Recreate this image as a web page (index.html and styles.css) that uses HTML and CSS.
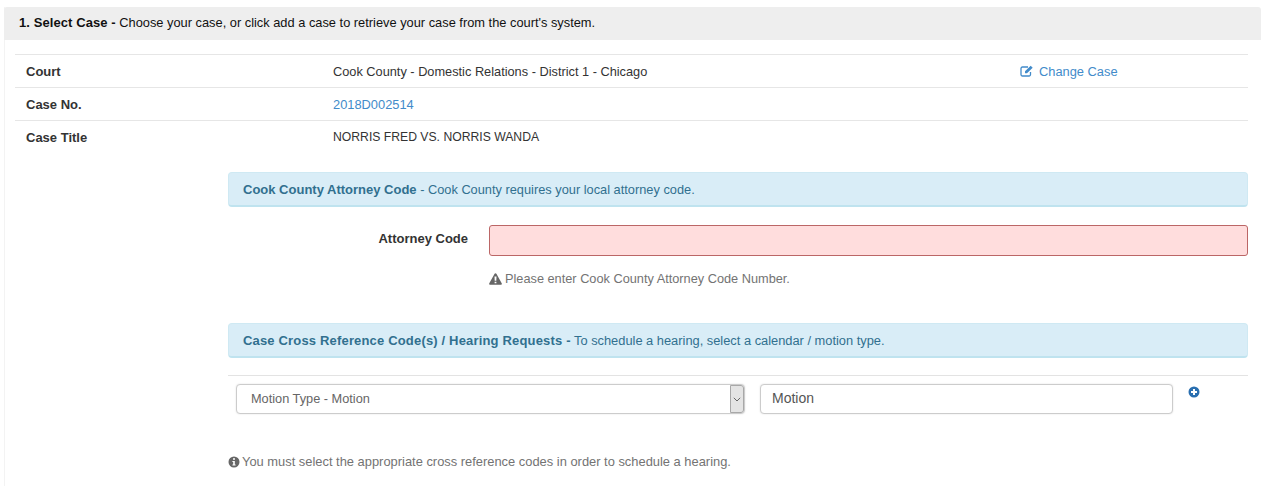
FILE: index.html
```html
<!DOCTYPE html>
<html lang="en">
<head>
<meta charset="utf-8">
<title>Select Case</title>
<link rel="stylesheet" href="styles.css">
</head>
<body>
<section class="panel">
  <header class="panel-head"><b>1. Select Case -</b> Choose your case, or click add a case to retrieve your case from the court's system.</header>
  <div class="panel-body">
    <div class="info-table">
      <div class="info-row">
        <div class="info-label">Court</div>
        <div class="info-value">Cook County - Domestic Relations - District 1 - Chicago</div>
        <a class="info-action" href="#">
          <svg class="icon-edit" viewBox="0 0 14 12" aria-hidden="true"><path d="M10.5 7v2.600A1.400 1.400 0 0 1 9.100 11H2.400A1.400 1.400 0 0 1 1 9.600V3.400A1.400 1.400 0 0 1 2.400 2H8" fill="none" stroke="currentColor" stroke-width="1.300"/><path d="M5 6.300 10.700 .8l2 1.900L7 8.300H5z" fill="currentColor"/></svg>
          Change Case</a>
      </div>
      <div class="info-row">
        <div class="info-label">Case No.</div>
        <div class="info-value"><a href="#">2018D002514</a></div>
      </div>
      <div class="info-row info-row-last">
        <div class="info-label">Case Title</div>
        <div class="info-value info-caps">NORRIS FRED VS. NORRIS WANDA</div>
      </div>
    </div>

    <div class="content">
      <div class="alert"><b>Cook County Attorney Code</b> - Cook County requires your local attorney code.</div>
      <div class="form-row">
        <label class="form-label" for="code">Attorney Code</label>
        <input class="form-input" id="code" type="text">
      </div>
      <p class="help">
        <svg class="icon-warn" viewBox="0 0 13 12" aria-hidden="true"><path fill-rule="evenodd" d="M6.500.3c.4 0 .7.200.9.500l5.300 9.500c.4.700-.1 1.500-.9 1.500H1.200c-.8 0-1.300-.8-.9-1.500L5.600.8c.2-.3.5-.5.900-.5zM5.500 3.500l.2 4.300h1.600l.2-4.300zM5.600 8.700v1.600h1.800V8.700z"/></svg>
        Please enter Cook County Attorney Code Number.</p>

      <div class="alert alert-second"><b class="spaced">Case Cross Reference Code(s) / Hearing Requests -</b> To schedule a hearing, select a calendar / motion type.</div>
      <hr class="rule">
      <div class="select-row">
        <div class="select-wrap">
          <select class="select"><option>Motion Type - Motion</option></select>
          <span class="select-arrow"><svg viewBox="0 0 8 5" aria-hidden="true"><path d="M.8.800 4 4l3.200-3.200" fill="none" stroke="currentColor" stroke-width="1"/></svg></span>
        </div>
        <input class="motion-input" type="text" value="Motion">
        <a class="add" href="#" aria-label="Add">
          <svg viewBox="0 0 12 12" aria-hidden="true"><path fill-rule="evenodd" d="M6 .5a5.500 5.500 0 1 1 0 11 5.500 5.500 0 0 1 0-11zM5 3v2H3v2h2v2h2V7h2V5H7V3z"/></svg>
        </a>
      </div>
      <p class="note">
        <svg class="icon-info" viewBox="0 0 12 12" aria-hidden="true"><path fill-rule="evenodd" d="M6 .5a5.500 5.500 0 1 1 0 11 5.500 5.500 0 0 1 0-11zM5 2.200v1.600h2V2.200zM4.400 5v1h.8v2.600h-.8v1h3.200v-1h-.8V5z"/></svg>
        You must select the appropriate cross reference codes in order to schedule a hearing.</p>
    </div>
  </div>
</section>
</body>
</html>
```
FILE: styles.css
```css
* { box-sizing: border-box; }
html, body { margin: 0; padding: 0; background: #fff; }
body {
  height: 486px;
  overflow: hidden;
  padding: 7px 0 0 4px;
  font: 12.8px/17px "Liberation Sans", Arial, sans-serif;
  color: #333;
}
a { color: #428bca; text-decoration: none; }
b { font-weight: 700; font-size: 13px; }

.panel { min-height: 479px; border-left: 1px solid #f3f3f3; }
.panel-head {
  height: 33px;
  margin-left: -1px;
  padding: 7px 15px 8px;
  background: #eee;
  border-radius: 3px 3px 0 0;
  font-size: 12.84px;
  color: #111;
}
.panel-head b { letter-spacing: .08px; }
.panel-body { padding: 14px 13px 0 10px; }

.info-row {
  display: grid;
  grid-template-columns: 307px 687px 1fr;
  height: 33px;
  padding: 8px 0 0 11px;
  border-top: 1px solid #e6e6e6;
}
.info-row-last { height: 35px; }
.info-label { font-size: 13px; font-weight: 700; color: #333; }
.info-value { font-size: 12.77px; }
.info-value a { font-size: 12.85px; }
.info-caps { font-size: 12.2px; }
.info-action { display: flex; align-items: center; gap: 5px; height: 17px; font-size: 12.85px; }
.icon-edit { width: 14px; height: 12px; margin-top: -2px; }

.content { margin: 17px 0 0 213px; }
.alert {
  height: 35px;
  padding: 8px 14px;
  background: #d9edf7;
  border: 1px solid #cfe9f3;
  border-bottom: 2px solid #bfe3ef;
  border-radius: 4px;
  font-size: 12.8px;
  color: #31708f;
}
.alert-second { margin-top: 36px; font-size: 12.85px; }
.alert .spaced { letter-spacing: .17px; }

.form-row { display: flex; align-items: flex-start; margin-top: 18px; }
.form-label {
  width: 261px;
  padding: 5px 21px 0 0;
  text-align: right;
  font-size: 13px;
  font-weight: 700;
  color: #333;
}
.form-input {
  flex: 1;
  min-width: 0;
  height: 31px;
  padding: 0 12px;
  background: #fdd;
  border: 1px solid #b66;
  border-radius: 3px;
  outline: 0;
}
.help {
  display: flex;
  align-items: center;
  gap: 3px;
  margin: 14px 0 0 261px;
  font-size: 12.76px;
  color: #737373;
}
.icon-warn { width: 13px; height: 12px; fill: #666; }

.rule { height: 1px; margin: 17px 0 0; border: 0; background: #e3e3e3; }

.select-row { display: flex; align-items: flex-start; margin: 8px 0 0 8px; }
.select-wrap { position: relative; width: 509px; height: 30px; }
.select {
  display: block;
  width: 100%;
  height: 100%;
  padding: 0 14px 2px;
  appearance: none;
  background: #fff;
  border: 1px solid #ccc;
  border-radius: 4px;
  box-shadow: 0 0 2px rgba(0,0,0,.12);
  font: 12.75px "Liberation Sans", Arial, sans-serif;
  color: #666;
}
.select-arrow {
  position: absolute;
  top: 1px; right: 1px; bottom: 1px;
  width: 14px;
  display: flex;
  align-items: center;
  justify-content: center;
  background: #e4e4e4;
  border: 1px solid #a8a8a8;
  border-radius: 0 3px 3px 0;
  color: #666;
}
.select-arrow svg { width: 8px; height: 5px; }
.motion-input {
  width: 413px;
  height: 30px;
  margin-left: 15px;
  padding: 0 11px 2px;
  background: #fff;
  border: 1px solid #ccc;
  border-radius: 4px;
  box-shadow: 0 0 2px rgba(0,0,0,.12);
  outline: 0;
  font: 14px "Liberation Sans", Arial, sans-serif;
  color: #555;
}
.add { display: block; width: 12px; height: 12px; margin: 2px 0 0 15px; }
.add svg { display: block; width: 12px; height: 12px; fill: #2a6fb0; }

.note {
  display: flex;
  align-items: center;
  gap: 2px;
  margin: 39px 0 0;
  font-size: 12.9px;
  color: #737373;
}
.icon-info { width: 12px; height: 12px; fill: #666; }
```
